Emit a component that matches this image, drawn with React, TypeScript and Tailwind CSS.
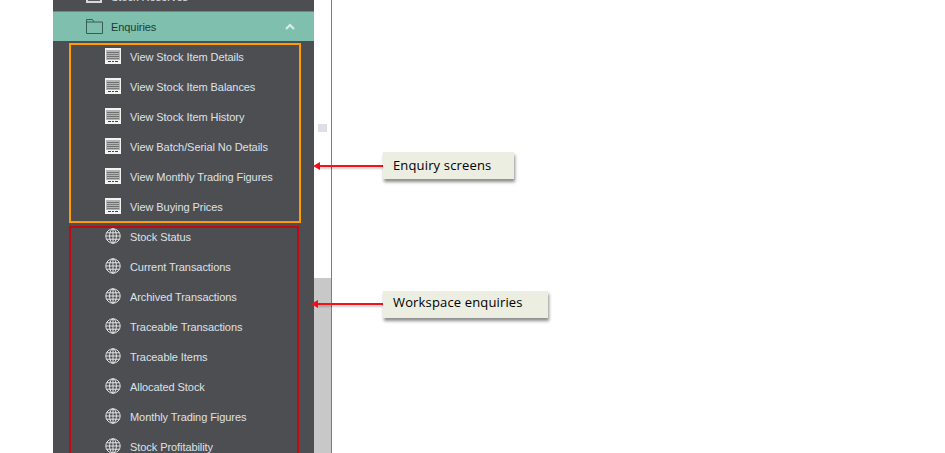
const screens = [
  "View Stock Item Details",
  "View Stock Item Balances",
  "View Stock Item History",
  "View Batch/Serial No Details",
  "View Monthly Trading Figures",
  "View Buying Prices",
];

const workspaces = [
  "Stock Status",
  "Current Transactions",
  "Archived Transactions",
  "Traceable Transactions",
  "Traceable Items",
  "Allocated Stock",
  "Monthly Trading Figures",
  "Stock Profitability",
];

const ScreenIcon = () => (
  <svg className="h-4 w-4 shrink-0" viewBox="0 0 16 16" fill="none" shapeRendering="crispEdges">
    <rect x="0" y="0" width="16" height="16" fill="#f2f2f2" />
    <rect x="1" y="2" width="14" height="10" fill="#b4b4b4" />
    <rect x="2" y="4" width="12" height="1" fill="#6f6f6f" />
    <rect x="2" y="6" width="12" height="1" fill="#7c7c7c" />
    <rect x="2" y="8" width="12" height="1" fill="#6f6f6f" />
    <rect x="2" y="10" width="12" height="1" fill="#7c7c7c" />
    <rect x="3" y="13" width="3" height="1" fill="#444444" />
    <rect x="7" y="13" width="2" height="1" fill="#444444" />
    <rect x="10" y="13" width="3" height="1" fill="#444444" />
  </svg>
);

const GlobeIcon = () => (
  <svg className="h-4 w-4 shrink-0" viewBox="0 0 16 16" fill="none" stroke="#f0f0f0" strokeWidth="0.9">
    <circle cx="8" cy="8" r="7.2" />
    <ellipse cx="8" cy="8" rx="3.4" ry="7.2" />
    <path d="M8 1v14M1.5 4.8h13M0.8 8h14.4M1.5 11.2h13" />
  </svg>
);

const FolderIcon = () => (
  <svg className="h-[17px] w-[17px] shrink-0" viewBox="0 0 17 17" fill="none" stroke="#3b5a54" strokeWidth="1">
    <path d="M0.5 15.5V1.5h6l1.5 2.5h8.5v11.5z" />
    <path d="M0.5 4h7.5" />
  </svg>
);

const Row = ({ label, icon }: { label: string; icon: React.ReactNode }) => (
  <div className="flex h-[30px] items-center pl-[52px]">
    {icon}
    <span className="ml-[9px] translate-y-px text-[11px] tracking-[-0.07px] text-[#dfe1e6]">{label}</span>
  </div>
);

const Callout = ({ label, className }: { label: string; className: string }) => (
  <div
    className={`absolute flex h-[27px] items-center bg-[#ebeee0] pl-[10px] font-['Open_Sans',sans-serif] text-[13px] tracking-[0.15px] text-black shadow-[1px_3px_3px_rgba(0,0,0,0.45)] ${className}`}
  >
    {label}
  </div>
);

const Arrow = ({ className }: { className: string }) => (
  <div className={`absolute flex items-center ${className}`}>
    <div className="h-0 w-0 border-y-[4px] border-r-[7px] border-y-transparent border-r-[#f0101a]" />
    <div className="h-[2px] flex-1 bg-[#f5101a] shadow-[0_2px_2px_rgba(0,0,0,0.2)]" />
  </div>
);

export default function App() {
  return (
    <div className="relative h-[453px] w-[945px] overflow-hidden bg-white font-['Liberation_Sans',sans-serif]">
      <div className="flex h-full pl-[53px]">
        {/* Sidebar */}
        <div className="-mt-[19px] w-[261px] shrink-0 bg-[#4d4e52]">
          <div className="flex h-[30px] items-center pl-[33px]">
            <div className="h-4 w-4 translate-y-[-1px] border-2 border-[#d8d8d8] bg-[#5a5b5f]" />
            <span className="ml-[9px] translate-y-px text-[11px] text-[#dfe1e6]">Stock Reserves</span>
          </div>
          <div className="flex h-[30px] items-center border-t border-[#6b8a82] bg-[#7fbfae] pl-[33px] pr-[18px]">
            <FolderIcon />
            <span className="ml-[8px] flex-1 translate-y-px text-[11px] tracking-[-0.07px] text-[#1d3a36]">Enquiries</span>
            <svg className="h-3 w-3" viewBox="0 0 12 12" fill="none" stroke="#d8eee8" strokeWidth="2">
              <path d="M2 8l4-4 4 4" />
            </svg>
          </div>
          {screens.map((s) => (
            <Row key={s} label={s} icon={<ScreenIcon />} />
          ))}
          {workspaces.map((s) => (
            <Row key={s} label={s} icon={<GlobeIcon />} />
          ))}
        </div>

        {/* Scrollbar */}
        <div className="box-content flex w-[17px] shrink-0 flex-col border-r border-[#7d7d7d]">
          <div className="h-[278px] bg-white pl-[4px] pt-[124px]">
            <div className="h-[8px] w-[9px] bg-[#dcdfe6]" />
          </div>
          <div className="flex-1 bg-[#c8c8c8]" />
        </div>
      </div>

      {/* Annotation overlays */}
      <div className="absolute left-[69px] top-[43px] h-[180px] w-[232px] border-2 border-[#ff9c00]" />
      <div className="absolute left-[69px] top-[226px] h-[240px] w-[230px] border-2 border-[#c00a12]" />

      <Arrow className="left-[313px] top-[162px] h-[8px] w-[70px]" />
      <Arrow className="left-[311px] top-[300px] h-[8px] w-[72px]" />

      <Callout label="Enquiry screens" className="left-[383px] top-[152px] w-[131px]" />
      <Callout label="Workspace enquiries" className="left-[383px] top-[291px] w-[165px] pb-[3px]" />
    </div>
  );
}
